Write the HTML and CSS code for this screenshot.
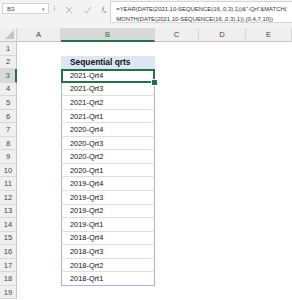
FILE: index.html
```html
<!DOCTYPE html>
<html lang="en">
<head>
    <meta charset="UTF-8">
    <meta name="viewport" content="width=device-width, initial-scale=1.0">
    <title>Sequential quarters</title>
    <link rel="stylesheet" href="styles.css">
</head>
<body>
    <div class="toolbar">
        <div class="namebox">
            <span>B3</span>
            <span class="drop">&#9662;</span>
        </div>
        <div class="grip"><i></i><i></i><i></i></div>
        <div class="fx-buttons">
            <svg class="btn" width="8" height="8" viewBox="0 0 8 8"><path d="M1 1L7 7M7 1L1 7" stroke="#b4b4b4" stroke-width="1"/></svg>
            <svg class="btn" width="9" height="8" viewBox="0 0 9 8"><path d="M1 4.5L3.5 7L8 1" stroke="#b4b4b4" stroke-width="1" fill="none"/></svg>
            <span class="fx">f<sub>x</sub></span>
        </div>
        <div class="formula">=YEAR(DATE(2021,10-SEQUENCE(16,,0,3),1))&amp;"-Qrt"&amp;MATCH(<br>MONTH(DATE(2021,10-SEQUENCE(16,,0,3),1)),{0,4,7,10})</div>
    </div>
    <div class="sheet" id="sheet"></div>
    <script>
        const columns = ["A", "B", "C", "D", "E"];
        const sheet = document.getElementById("sheet");

        function makeCell(className, text) {
            let cell = document.createElement("div");
            cell.className = className;
            if (text) cell.textContent = text;
            sheet.appendChild(cell);
            return cell;
        }

        // quarters, newest first
        let quarters = [];
        for (let year = 2021; year >= 2018; year--) {
            for (let q = 4; q >= 1; q--) {
                quarters.push(`${year}-Qrt${q}`);
            }
        }

        makeCell("head corner");
        columns.forEach(col => {
            makeCell(col === "B" ? "head col-head selected" : "head col-head", col);
        });

        for (let row = 1; row <= 19; row++) {
            makeCell(row === 3 ? "head row-head selected" : "head row-head", String(row));
            columns.forEach(col => {
                let cls = "cell";
                let text = "";
                if (col === "B" && row === 2) {
                    cls += " tbl tbl-head";
                    text = "Sequential qrts";
                } else if (col === "B" && row >= 3 && row <= 18) {
                    cls += " tbl";
                    if (row === 18) cls += " tbl-last";
                    if (row === 3) cls += " current";
                    text = quarters[row - 3];
                }
                makeCell(cls, text);
            });
        }
    </script>
</body>
</html>
```

FILE: styles.css
```css
* {
    margin: 0;
    padding: 0;
    box-sizing: border-box;
}
body {
    width: 292px;
    height: 300px;
    overflow: hidden;
    background-color: #fff;
    font-family: "Liberation Sans", Arial, sans-serif;
    color: #222;
}
.toolbar {
    height: 28px;
    display: flex;
    align-items: flex-start;
    background-color: #f3f3f3;
}
.namebox {
    margin: 3px 0 0 2px;
    width: 47px;
    height: 11px;
    padding: 0 3px 0 4px;
    display: flex;
    justify-content: space-between;
    align-items: center;
    background-color: #fff;
    border: 1px solid #d4d4d4;
    font-size: 6px;
    color: #444;
}
.namebox .drop {
    font-size: 5px;
    color: #777;
}
.grip {
    margin: 6px 0 0 5px;
    display: flex;
    flex-direction: column;
    gap: 1px;
}
.grip i {
    width: 1px;
    height: 1px;
    background-color: #a8a8a8;
}
.fx-buttons {
    margin: 5px 0 0 10px;
    display: flex;
    align-items: center;
    gap: 10px;
    height: 9px;
}
.fx {
    font-family: "Liberation Serif", serif;
    font-style: italic;
    font-size: 7px;
    color: #555;
}
.fx sub {
    font-size: 5px;
}
.formula {
    margin: 1px 0 0 4px;
    flex: 1;
    height: 22px;
    padding: 2px 0 0 5px;
    background-color: #fff;
    border: 1px solid #d4d4d4;
    border-right: none;
    font-size: 5.9px;
    line-height: 10px;
    white-space: nowrap;
    overflow: hidden;
    color: #333;
}
.sheet {
    display: grid;
    grid-template-columns: 17px 44px 94px 44px 47px 46px;
    grid-template-rows: 14px repeat(19, 13.55px);
}
.head {
    display: flex;
    align-items: center;
    justify-content: center;
    background-color: #efefef;
    font-size: 7.6px;
    color: #444;
}
.corner {
    position: relative;
    border-right: 1px solid #d0d0d0;
    border-bottom: 1px solid #c6c6c6;
}
.corner::after {
    content: "";
    position: absolute;
    right: 2px;
    bottom: 2px;
    border-style: solid;
    border-width: 0 0 9px 9px;
    border-color: transparent transparent #c4c4c4 transparent;
}
.col-head {
    border-right: 1px solid #d5d5d5;
    border-bottom: 1px solid #c6c6c6;
}
.row-head {
    border-right: 1px solid #c6c6c6;
    border-bottom: 1px solid #d9d9d9;
}
.col-head.selected {
    background-color: #d9d9d9;
    color: #217346;
    border-bottom: 2px solid #217346;
}
.row-head.selected {
    background-color: #d9d9d9;
    color: #217346;
    border-right: 2px solid #217346;
}
.cell {
    display: flex;
    align-items: center;
    padding-left: 8px;
    font-size: 7.4px;
    color: #111;
}
.tbl {
    border-left: 1px solid #9fb6e0;
    border-right: 1px solid #9fb6e0;
    border-bottom: 1px solid #dedede;
}
.tbl-head {
    background-color: #dde6f3;
    border-left: none;
    border-right: none;
    border-bottom: none;
    padding-left: 9px;
    font-weight: bold;
    font-size: 8.4px;
}
.tbl-last {
    border-bottom: 1px solid #9fb6e0;
}
.current {
    position: relative;
    outline: 2px solid #217346;
    outline-offset: -2px;
}
.current::after {
    content: "";
    position: absolute;
    right: -4px;
    bottom: -4px;
    width: 5px;
    height: 5px;
    background-color: #217346;
    border: 1px solid #fff;
}
```
